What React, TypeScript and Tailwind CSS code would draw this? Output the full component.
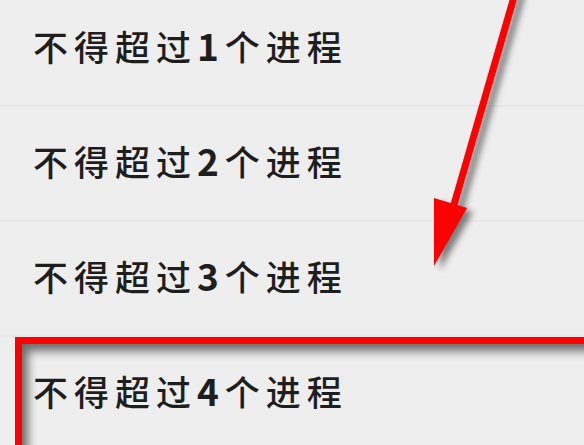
import React from 'react';

const items = [1, 2, 3, 4];

const Arrow: React.FC = () => (
  <svg className="absolute left-0 top-0" width="584" height="445" viewBox="0 0 584 445">
    <defs>
      <filter id="sh" x="-20%" y="-20%" width="140%" height="140%">
        <feGaussianBlur stdDeviation="3" />
      </filter>
    </defs>
    <g transform="translate(6,4)" opacity="0.6" filter="url(#sh)">
      <line x1="516" y1="-10" x2="451" y2="215" stroke="#333" strokeWidth="7" />
      <polygon points="434,266 434,198 467,208" fill="#333" />
    </g>
    <line x1="516" y1="-10" x2="451" y2="215" stroke="#ff0000" strokeWidth="7" />
    <polygon points="434,266 434,198 467,208" fill="#ff0000" />
  </svg>
);

export default function App() {
  return (
    <div className="relative h-[445px] w-[584px] overflow-hidden bg-[#eeeeee]">
      <div className="-mt-[8px] flex flex-col">
        {items.map((n) => (
          <div
            key={n}
            className="flex h-[115px] items-center border-b-2 border-[#e6e6e6] pb-[5px] pl-[33px]"
          >
            <span
              className="text-[35px] font-medium tracking-[6px] text-[#1e1e1e]"
              style={{ fontFamily: '"Noto Sans CJK SC", "Noto Sans", sans-serif' }}
            >
              不得超过<span className="text-[37px] font-bold">{n}</span>个进程
            </span>
          </div>
        ))}
      </div>
      <div className="absolute left-[15px] top-[337px] h-[130px] w-[600px] border-[7px] border-[#ff0000] shadow-[inset_6px_7px_10px_rgba(0,0,0,0.55)]" />
      <Arrow />
    </div>
  );
}
